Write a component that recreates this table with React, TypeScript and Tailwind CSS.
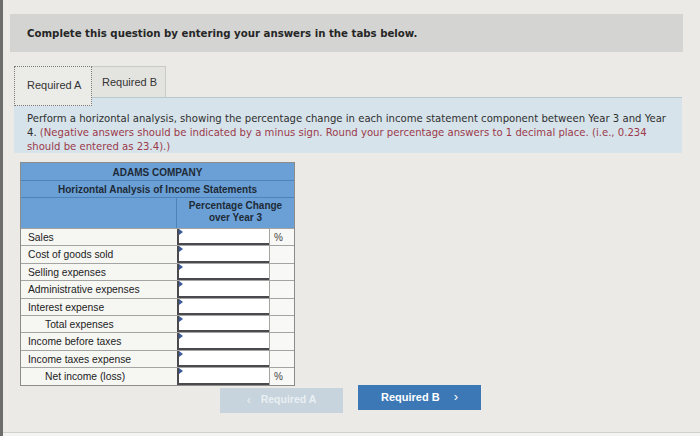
import React from "react";

const rows = [
  { label: "Sales", indent: false, pct: true },
  { label: "Cost of goods sold", indent: false, pct: false },
  { label: "Selling expenses", indent: false, pct: false },
  { label: "Administrative expenses", indent: false, pct: false },
  { label: "Interest expense", indent: false, pct: false },
  { label: "Total expenses", indent: true, pct: false },
  { label: "Income before taxes", indent: false, pct: false },
  { label: "Income taxes expense", indent: false, pct: false },
  { label: "Net income (loss)", indent: true, pct: true },
];

const App = () => {
  return (
    <div className="w-[700px] h-[436px] bg-[#ebeae6] border-l-[3px] border-[#6d6d6b] flex flex-col overflow-hidden">
      {/* Instruction bar */}
      <div className="mt-[14px] ml-[7px] w-[673px] h-[38px] bg-[#d4d4d2] flex items-center pl-[17px] pt-[2px]">
        <span className="font-['DejaVu_Sans',sans-serif] font-bold text-[10.2px] text-[#262626]">
          Complete this question by entering your answers in the tabs below.
        </span>
      </div>

      {/* Tabs */}
      <div className="mt-[14px] ml-[11px] flex items-start relative z-10">
        <div className="w-[78px] h-[40px] border border-dotted border-[#7a7a7a] bg-[#ebebe8] flex items-center pl-[12px] pb-[2px]">
          <span className="font-['Liberation_Sans',sans-serif] text-[11px] text-[#333]">Required A</span>
        </div>
        <div className="w-[74px] h-[31px] border-t border-r border-[#c9c9c6] bg-[#e3e3e0] flex items-center pl-[10px]">
          <span className="font-['Liberation_Sans',sans-serif] text-[11px] text-[#333]">Required B</span>
        </div>
      </div>

      {/* Question text */}
      <div className="-mt-[9px] ml-[11px] w-[668px] h-[56px] bg-[#d6e3ea] border-t border-[#b9c7cf] pl-[13px] pt-[14px]">
        <p className="font-['DejaVu_Sans',sans-serif] text-[10.1px] leading-[14px] text-[#2f2f2f] whitespace-nowrap">
          Perform a horizontal analysis, showing the percentage change in each income statement component between Year 3 and Year
          <br />
          4. <span className="text-[#9c3a4a]">(Negative answers should be indicated by a minus sign. Round your percentage answers to 1 decimal place. (i.e., 0.234</span>
          <br />
          <span className="text-[#9c3a4a]">should be entered as 23.4).)</span>
        </p>
      </div>

      {/* Table */}
      <div className="mt-[9px] ml-[17px] w-[275px] font-['Liberation_Sans',sans-serif] border border-[#8c8c8a]">
        <div className="h-[18px] bg-[#6aa0d5] border-b border-[#4d83bb] flex items-center justify-center text-[10px] font-bold text-[#1e2a38] pt-[1px]">
          ADAMS COMPANY
        </div>
        <div className="h-[17px] bg-[#6aa0d5] border-b border-[#4d83bb] flex items-center justify-center text-[10px] font-bold text-[#1e2a38]">
          Horizontal Analysis of Income Statements
        </div>
        <div className="h-[30px] bg-[#6aa0d5] flex">
          <div className="w-[156px] border-r border-[#4d83bb]" />
          <div className="flex-1 flex flex-col items-center justify-center text-[10px] leading-[12px] font-bold text-[#1e2a38] pb-[2px]">
            <span>Percentage Change</span>
            <span>over Year 3</span>
          </div>
        </div>
        {rows.map((r) => (
          <div key={r.label} className="h-[17.4px] flex border-t border-[#a4a4a2]">
            <div
              className={
                r.indent
                  ? "w-[156px] bg-[#f6f6f3] flex items-center pl-[24px] pt-[1px] text-[10.3px] text-[#222]"
                  : "w-[156px] bg-[#f6f6f3] flex items-center pl-[7px] pt-[1px] text-[10.3px] text-[#222]"
              }
            >
              {r.label}
            </div>
            <div className="w-[92px] bg-white border-l-2 border-b-2 border-[#4a4a4e] relative">
              <div className="absolute top-0 left-0 w-0 h-0 border-t-[3px] border-b-[3px] border-l-[4px] border-t-transparent border-b-transparent border-l-[#3a5a9a]" />
            </div>
            <div className="flex-1 bg-[#f8f8f6] border-l border-[#a4a4a2] flex items-center pl-[4px] text-[10px] text-[#444]">
              {r.pct ? "%" : ""}
            </div>
          </div>
        ))}
      </div>

      {/* Navigation buttons */}
      <div className="-mt-[1px] ml-[217px] flex gap-[15px] items-start">
        <div className="w-[123px] h-[25px] bg-[#c7d4dd] flex items-center justify-center gap-[10px] mt-[3px]">
          <span className="text-[#e9eff3] text-[12px] font-['Liberation_Sans',sans-serif]">‹</span>
          <span className="text-[#e9eff3] text-[10.5px] font-['Liberation_Sans',sans-serif] font-bold">Required A</span>
        </div>
        <div className="w-[123px] h-[25px] bg-[#3b78b5] flex items-center justify-center gap-[14px]">
          <span className="text-white text-[11px] font-['Liberation_Sans',sans-serif] font-bold">Required B</span>
          <span className="text-white text-[13px] font-['Liberation_Sans',sans-serif]">›</span>
        </div>
      </div>

      <div className="mt-auto h-[4px] border-t border-[#d0d0cc] bg-[#f4f4f2]" />
    </div>
  );
};

export default App;
